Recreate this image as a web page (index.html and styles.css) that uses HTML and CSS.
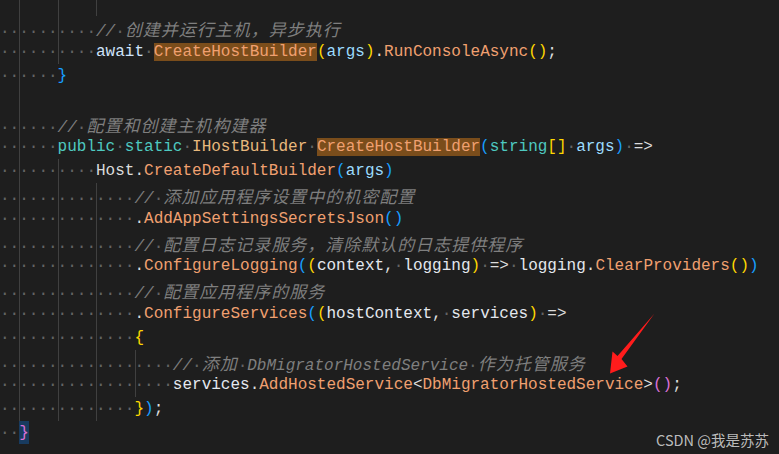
FILE: index.html
```html
<!DOCTYPE html>
<html lang="zh-CN">
<head>
<meta charset="utf-8">
<title>Program.cs</title>
<link rel="stylesheet" href="styles.css">
</head>
<body>
<div class="editor">
<div class="ln ln0 g4812"></div>
<div class="ln g48"><span class="ws">··········</span><span class="cm">//<span class="ws">·</span><span class="cj">创建并运行主机，异步执行</span></span></div>
<div class="ln g48"><span class="ws">··········</span><span class="aw">await</span><span class="ws">·</span><span class="fn hl">CreateHostBuilder</span><span class="b1">(</span><span class="pa">args</span><span class="b1">)</span>.<span class="fn">RunConsoleAsync</span><span class="b1">()</span>;</div>
<div class="ln g4"><span class="ws">······</span><span class="b3">}</span></div>
<div class="ln g4"></div>
<div class="ln g4"><span class="ws">······</span><span class="cm">//<span class="ws">·</span><span class="cj">配置和创建主机构建器</span></span></div>
<div class="ln g4"><span class="ws">······</span><span class="kw">public</span><span class="ws">·</span><span class="kw">static</span><span class="ws">·</span><span class="ty">IHostBuilder</span><span class="ws">·</span><span class="fn hl">CreateHostBuilder</span><span class="b3">(</span><span class="kw">string</span><span class="b1">[]</span><span class="ws">·</span><span class="pa">args</span><span class="b3">)</span><span class="ws">·</span>=&gt;</div>
<div class="ln g48"><span class="ws">··········</span>Host.<span class="fn">CreateDefaultBuilder</span><span class="b3">(</span><span class="pa">args</span><span class="b3">)</span></div>
<div class="ln g4812"><span class="ws">··············</span><span class="cm">//<span class="ws">·</span><span class="cj">添加应用程序设置中的机密配置</span></span></div>
<div class="ln g4812"><span class="ws">··············</span>.<span class="fn">AddAppSettingsSecretsJson</span><span class="b3">()</span></div>
<div class="ln g4812"><span class="ws">··············</span><span class="cm">//<span class="ws">·</span><span class="cj">配置日志记录服务，清除默认的日志提供程序</span></span></div>
<div class="ln g4812"><span class="ws">··············</span>.<span class="fn">ConfigureLogging</span><span class="b3">(</span><span class="b1">(</span><span class="pv">context</span>,<span class="ws">·</span><span class="pv">logging</span><span class="b1">)</span><span class="ws">·</span>=&gt;<span class="ws">·</span><span class="pv">logging</span>.<span class="fn">ClearProviders</span><span class="b1">()</span><span class="b3">)</span></div>
<div class="ln g4812"><span class="ws">··············</span><span class="cm">//<span class="ws">·</span><span class="cj">配置应用程序的服务</span></span></div>
<div class="ln g4812"><span class="ws">··············</span>.<span class="fn">ConfigureServices</span><span class="b3">(</span><span class="b1">(</span><span class="pv">hostContext</span>,<span class="ws">·</span><span class="pv">services</span><span class="b1">)</span><span class="ws">·</span>=&gt;</div>
<div class="ln g4812"><span class="ws">··············</span><span class="b1">{</span></div>
<div class="ln g481216"><span class="ws">··················</span><span class="cm">//<span class="ws">·</span><span class="cj">添加</span><span class="ws">·</span>DbMigratorHostedService<span class="ws">·</span><span class="cj">作为托管服务</span></span></div>
<div class="ln g481216"><span class="ws">··················</span><span class="pv">services</span>.<span class="fn">AddHostedService</span>&lt;<span class="fn">DbMigratorHostedService</span>&gt;<span class="b2">()</span>;</div>
<div class="ln g4812"><span class="ws">··············</span><span class="b1">}</span><span class="b3">)</span>;</div>
<div class="ln"><span class="ws">··</span><span class="b2 match">}</span></div>
<div class="ln"></div>
</div>

<svg class="arrow" width="70" height="80" viewBox="0 0 70 80" aria-hidden="true">
  <polygon points="54.5,8.5 21.5,54 27.5,61.5 10,68.5 12.5,46.5 17.5,51" fill="#ff1c1c"/>
</svg>

<div class="mark">CSDN @我是苏苏</div>
</body>
</html>
```

FILE: styles.css
```css
html, body {
  margin: 0;
  padding: 0;
  background: #1e1e1e;
  overflow: hidden;
}

body {
  width: 779px;
  height: 454px;
  position: relative;
}

.editor {
  font-family: "Liberation Mono", "DejaVu Sans Mono", monospace;
  font-size: 16px;
  color: #dcdcdc;
}

.ln {
  height: 23.8px;
  line-height: 25px;
  white-space: pre;
}

.ln0 {
  height: 16.4px;
}

/* indent guides */
.g4 {
  background:
    linear-gradient(#404040, #404040) 19px 0 / 1px 100% no-repeat;
}
.g48 {
  background:
    linear-gradient(#404040, #404040) 19px 0 / 1px 100% no-repeat,
    linear-gradient(#404040, #404040) 58px 0 / 1px 100% no-repeat;
}
.g4812 {
  background:
    linear-gradient(#404040, #404040) 19px 0 / 1px 100% no-repeat,
    linear-gradient(#404040, #404040) 58px 0 / 1px 100% no-repeat,
    linear-gradient(#404040, #404040) 96px 0 / 1px 100% no-repeat;
}
.g481216 {
  background:
    linear-gradient(#404040, #404040) 19px 0 / 1px 100% no-repeat,
    linear-gradient(#404040, #404040) 58px 0 / 1px 100% no-repeat,
    linear-gradient(#404040, #404040) 96px 0 / 1px 100% no-repeat,
    linear-gradient(#404040, #404040) 135px 0 / 1px 100% no-repeat;
}

/* tokens */
.ws { color: #646464; font-style: normal; }
.cm { color: #7f7f7f; font-style: italic; }
.cj {
  font-family: "Noto Sans CJK SC", sans-serif;
  font-size: 17px;
  letter-spacing: 1px;
}
.kw { color: #4ec9c0; }
.aw { color: #cfe3fa; }
.ty { color: #e8b87c; }
.fn { color: #f0a070; }
.pa { color: #9cdcfe; }
.pv { color: #e4e8ee; }
.hl { background: #7a4d1b; }

.b1 { color: #ffd700; }
.b2 { color: #da70d6; }
.b3 { color: #179fff; }

.match {
  display: inline-block;
  height: 23px;
  vertical-align: top;
  background: #183b5f;
}

.arrow {
  position: absolute;
  left: 600px;
  top: 305px;
}

.mark {
  position: absolute;
  right: 10px;
  top: 430px;
  font-family: "Noto Sans CJK SC", sans-serif;
  font-size: 14.5px;
  line-height: 20px;
  color: rgba(235, 235, 235, 0.8);
  text-shadow: 0 0 1px rgba(0, 0, 0, 0.6);
}
```
